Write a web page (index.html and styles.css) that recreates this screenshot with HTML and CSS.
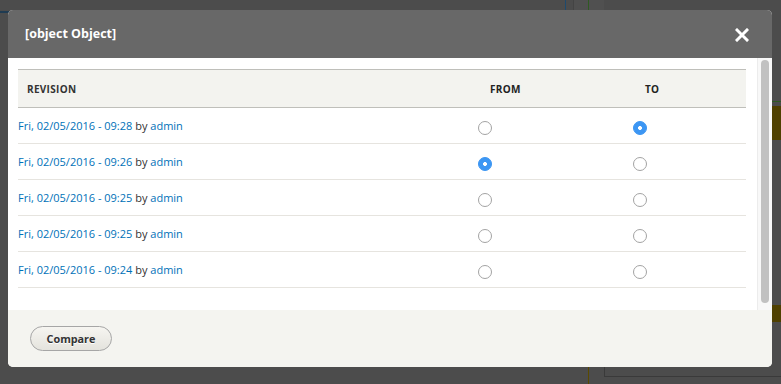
FILE: index.html
```html
<!DOCTYPE html>
<html lang="en">
<head>
    <meta charset="UTF-8">
    <title>Revisions</title>
    <link rel="stylesheet" href="styles.css">
</head>
<body>

    <!-- Dimmed page behind the dialog -->
    <div class="backdrop">
        <span class="bg-line blue-top"></span>
        <span class="bg-line v-blue"></span>
        <span class="bg-line v-gray"></span>
        <span class="bg-line v-green"></span>
        <span class="bg-line h-green"></span>
        <span class="bg-block yellow-1"></span>
        <span class="bg-block yellow-2"></span>
        <span class="bg-line v-yellow"></span>
        <span class="bg-box"></span>
    </div>

    <!-- Dialog -->
    <div class="dialog">
        <div class="dialog-title">
            <span class="title-text">[object Object]</span>
            <button class="close-btn" type="button" aria-label="Close">
                <svg width="14" height="14" viewBox="0 0 14 14">
                    <path d="M2 2 L12 12 M12 2 L2 12" stroke="#fff" stroke-width="3" stroke-linecap="square"/>
                </svg>
            </button>
        </div>

        <div class="dialog-content">
            <div class="table-wrap">
                <div class="rev-table">
                    <div class="rev-row rev-head">
                        <div class="cell col-rev">REVISION</div>
                        <div class="cell col-from">FROM</div>
                        <div class="cell col-to">TO</div>
                    </div>
                    <div class="rev-row">
                        <div class="cell col-rev"><span><a href="#">Fri, 02/05/2016 - 09:28</a> by <a href="#">admin</a></span></div>
                        <div class="cell col-from"><input type="radio" name="from"></div>
                        <div class="cell col-to"><input type="radio" name="to" checked></div>
                    </div>
                    <div class="rev-row">
                        <div class="cell col-rev"><span><a href="#">Fri, 02/05/2016 - 09:26</a> by <a href="#">admin</a></span></div>
                        <div class="cell col-from"><input type="radio" name="from" checked></div>
                        <div class="cell col-to"><input type="radio" name="to"></div>
                    </div>
                    <div class="rev-row">
                        <div class="cell col-rev"><span><a href="#">Fri, 02/05/2016 - 09:25</a> by <a href="#">admin</a></span></div>
                        <div class="cell col-from"><input type="radio" name="from"></div>
                        <div class="cell col-to"><input type="radio" name="to"></div>
                    </div>
                    <div class="rev-row">
                        <div class="cell col-rev"><span><a href="#">Fri, 02/05/2016 - 09:25</a> by <a href="#">admin</a></span></div>
                        <div class="cell col-from"><input type="radio" name="from"></div>
                        <div class="cell col-to"><input type="radio" name="to"></div>
                    </div>
                    <div class="rev-row">
                        <div class="cell col-rev"><span><a href="#">Fri, 02/05/2016 - 09:24</a> by <a href="#">admin</a></span></div>
                        <div class="cell col-from"><input type="radio" name="from"></div>
                        <div class="cell col-to"><input type="radio" name="to"></div>
                    </div>
                </div>
            </div>
            <!-- fake scrollbar -->
            <div class="scrollbar"><div class="thumb"></div></div>
        </div>

        <div class="dialog-footer">
            <button class="compare-btn" type="button">Compare</button>
        </div>
    </div>

</body>
</html>
```

FILE: styles.css
```css
body {
    margin: 0;
    padding: 10px 0 0 8px;
    width: 781px;
    height: 384px;
    box-sizing: border-box;
    overflow: hidden;
    background-color: #4c4c4c;
    font-family: "Open Sans", "DejaVu Sans", sans-serif;
    position: relative;
}
/* Background page bits showing through the overlay */
.backdrop .bg-line,
.backdrop .bg-block,
.backdrop .bg-box {
    position: absolute;
    display: block;
}
.blue-top {
    left: 0;
    top: 11px;
    width: 10px;
    height: 2px;
    background-color: #1f3b52;
}
.v-blue {
    left: 565px;
    top: 0;
    width: 1px;
    height: 10px;
    background-color: #1e4a6e;
}
.v-gray {
    left: 573px;
    top: 0;
    width: 30px;
    height: 10px;
    background-color: #505050;
    border-left: 1px solid #444;
}
.v-green {
    left: 588px;
    top: 0;
    width: 1px;
    height: 10px;
    background-color: #2f5a22;
}
.h-green {
    left: 772px;
    top: 101px;
    width: 9px;
    height: 1px;
    background-color: #2f5a22;
}
.yellow-1 {
    left: 772px;
    top: 106px;
    width: 9px;
    height: 34px;
    background-color: #4f4000;
}
.yellow-2 {
    left: 772px;
    top: 305px;
    width: 9px;
    height: 17px;
    background-color: #4f4000;
}
.v-yellow {
    left: 588px;
    top: 367px;
    width: 1px;
    height: 17px;
    background-color: #5a4a00;
}
.bg-box {
    left: 604px;
    top: 367px;
    width: 177px;
    height: 9px;
    border-left: 1px solid #3a3a3a;
    border-bottom: 1px solid #3a3a3a;
}
/* Dialog */
.dialog {
    position: relative;
    width: 764px;
    height: 357px;
    display: flex;
    flex-direction: column;
    border-radius: 5px;
    overflow: hidden;
    background-color: #fff;
}
.dialog-title {
    height: 48px;
    flex: none;
    display: flex;
    align-items: center;
    justify-content: space-between;
    background-color: #686868;
    padding: 0 23px 0 17px;
}
.title-text {
    color: #fff;
    font-weight: bold;
    font-size: 12.5px;
    margin-top: -1px;
}
.close-btn {
    border: none;
    background: none;
    padding: 0;
    width: 14px;
    height: 14px;
    margin-top: 2px;
    cursor: pointer;
}
.close-btn svg {
    display: block;
}
/* Content */
.dialog-content {
    height: 252px;
    flex: none;
    display: flex;
}
.table-wrap {
    flex: 1;
    padding: 11px 11px 0 10px;
}
.rev-row {
    display: flex;
    height: 35px;
    border-bottom: 1px solid #e6e4df;
    font-size: 11px;
}
.rev-row.rev-head {
    height: 37px;
    background-color: #f3f3ef;
    border-top: 1px solid #bfbfba;
    border-bottom: 1px solid #bfbfba;
    font-size: 10px;
    font-weight: bold;
    color: #222;
    letter-spacing: 0.3px;
}
.cell {
    display: flex;
    align-items: center;
}
.col-rev {
    width: 455px;
    color: #333;
    white-space: nowrap;
}
.col-from {
    width: 155px;
}
.col-to {
    flex: 1;
}
.rev-head .col-rev {
    padding-left: 9px;
    box-sizing: border-box;
}
.rev-head .col-from,
.rev-head .col-to {
    padding-left: 17px;
    box-sizing: border-box;
}
.cell a {
    color: #0071b8;
    text-decoration: none;
}
/* Radios */
.cell input[type="radio"] {
    appearance: none;
    -webkit-appearance: none;
    width: 14px;
    height: 14px;
    margin: 4px 0 0 5px;
    border: 1px solid #a3a3a3;
    border-radius: 50%;
    background-color: #fff;
    box-sizing: border-box;
}
.cell input[type="radio"]:checked {
    border-color: #3c96f3;
    background-color: #3c96f3;
    background-image: radial-gradient(circle, #fff 0 1.8px, transparent 2.2px);
}
/* Scrollbar */
.scrollbar {
    width: 15px;
    flex: none;
    box-sizing: border-box;
    background-color: #f8f8f8;
    border-left: 1px solid #ececec;
    padding: 2px 3px 7px 3px;
}
.scrollbar .thumb {
    height: 100%;
    background-color: #c1c1c1;
    border-radius: 4px;
}
/* Footer */
.dialog-footer {
    flex: 1;
    background-color: #f4f4f0;
    padding: 16px 0 0 22px;
}
.compare-btn {
    width: 82px;
    height: 25px;
    border: 1px solid #a6a6a6;
    border-radius: 13px;
    background: linear-gradient(#f6f5f1, #e4e3dd);
    font-family: "Open Sans", "DejaVu Sans", sans-serif;
    font-size: 10.8px;
    font-weight: bold;
    color: #333;
    text-shadow: 0 1px 0 #fff;
    padding: 0;
    cursor: pointer;
}
```
